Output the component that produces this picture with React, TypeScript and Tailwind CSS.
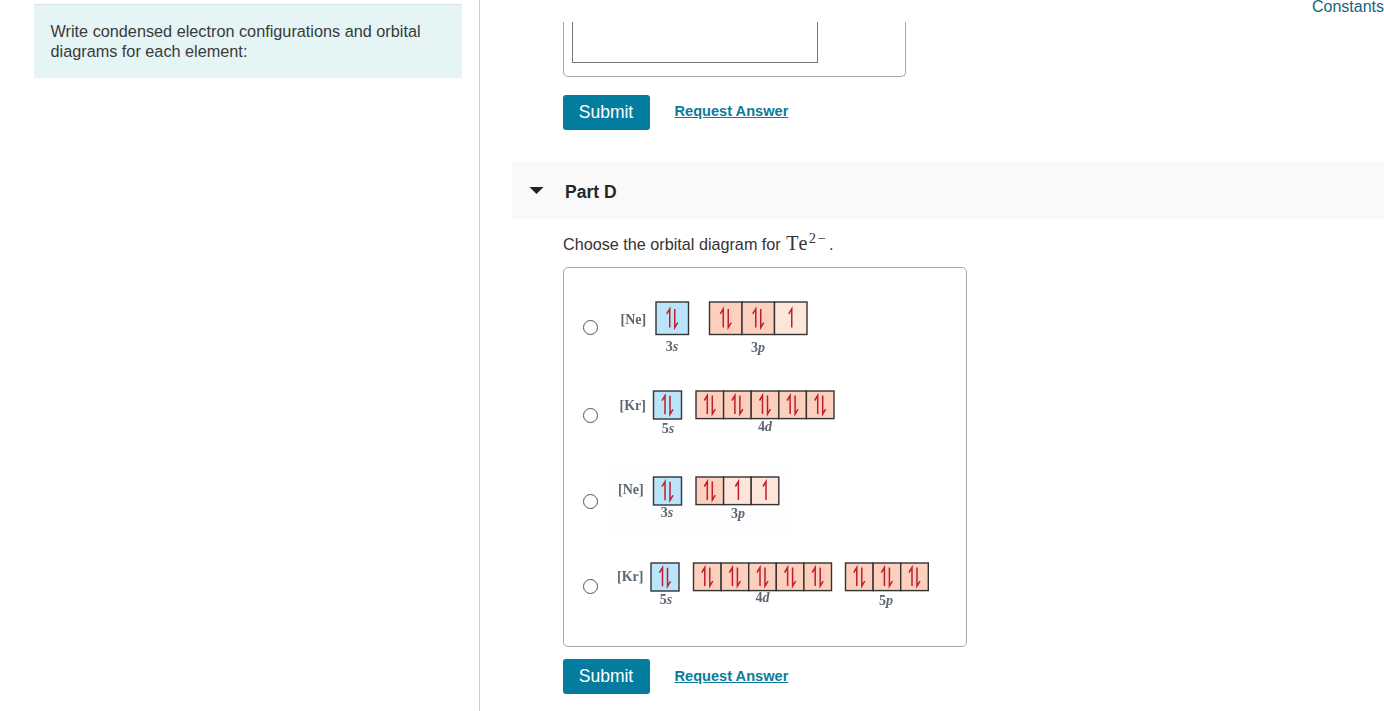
const sans = "font-['Liberation_Sans',Arial,sans-serif]"

type Group = {
  x: number
  y: number
  size: number
  fill: string
  cells: number[]
  label: [string, string]
  labelX: number
  labelY: number
}

type Option = {
  center: number
  rowClass: string
  core: { text: string; x: number; y: number }
  groups: Group[]
}

const BLUE = '#b9e4fa'
const PINK = '#fdd0be'
const PALE = '#fde5da'

const options: Option[] = [
  {
    center: 327,
    rowClass: 'h-[88px]',
    core: { text: '[Ne]', x: 620.5, y: 323.5 },
    groups: [
      { x: 656, y: 302, size: 32.5, fill: BLUE, cells: [2], label: ['3', 's'], labelX: 672, labelY: 351 },
      { x: 709.5, y: 302, size: 32.5, fill: PINK, cells: [2, 2, 1], label: ['3', 'p'], labelX: 758, labelY: 352 },
    ],
  },
  {
    center: 415,
    rowClass: 'h-[88px]',
    core: { text: '[Kr]', x: 619.5, y: 410 },
    groups: [
      { x: 653.5, y: 391, size: 28, fill: BLUE, cells: [2], label: ['5', 's'], labelX: 668, labelY: 433 },
      { x: 696, y: 391, size: 27.6, fill: PINK, cells: [2, 2, 2, 2, 2], label: ['4', 'd'], labelX: 765, labelY: 431 },
    ],
  },
  {
    center: 501,
    rowClass: 'h-[84px]',
    core: { text: '[Ne]', x: 618, y: 493.5 },
    groups: [
      { x: 653.5, y: 477, size: 28, fill: BLUE, cells: [2], label: ['3', 's'], labelX: 667, labelY: 517 },
      { x: 696, y: 477, size: 27.6, fill: PINK, cells: [2, 1, 1], label: ['3', 'p'], labelX: 738, labelY: 518 },
    ],
  },
  {
    center: 586,
    rowClass: 'h-[86px]',
    core: { text: '[Kr]', x: 617, y: 581 },
    groups: [
      { x: 651, y: 563, size: 28, fill: BLUE, cells: [2], label: ['5', 's'], labelX: 666, labelY: 604 },
      { x: 693.5, y: 563, size: 27.6, fill: PINK, cells: [2, 2, 2, 2, 2], label: ['4', 'd'], labelX: 762.5, labelY: 602 },
      { x: 845.5, y: 563, size: 27.6, fill: PINK, cells: [2, 2, 2], label: ['5', 'p'], labelX: 886, labelY: 605 },
    ],
  },
]

function Arrows({ cx, cy, count }: { cx: number; cy: number; count: number }) {
  const half = 9.3
  if (count === 1) {
    return (
      <path
        d={`M${cx + 1} ${cy + half} V${cy - half} L${cx - 2} ${cy - half + 5}`}
        fill="none"
        stroke="#bf1f2b"
        strokeWidth="1.5"
      />
    )
  }
  return (
    <g fill="none" stroke="#bf1f2b" strokeWidth="1.5">
      <path d={`M${cx - 2.5} ${cy + half} V${cy - half} L${cx - 5.5} ${cy - half + 5}`} />
      <path d={`M${cx + 2.5} ${cy - half} V${cy + half} L${cx + 5.5} ${cy + half - 5}`} />
    </g>
  )
}

function Diagram({ option, shaded }: { option: Option; shaded: boolean }) {
  const top = option.center - 40
  return (
    <svg width="330" height="80" viewBox={`610 ${top} 330 80`} className="blur-[0.5px] shrink-0">
      {shaded && <rect x="615" y="470" width="175" height="60" fill="#fdfdfd" />}
      <text x={option.core.x} y={option.core.y} fontFamily="Liberation Serif" fontSize="14" fontWeight="bold" fill="#5d6673">
        {option.core.text}
      </text>
      {option.groups.map((g, i) => (
        <g key={i}>
          {g.cells.map((n, j) => (
            <g key={j}>
              <rect
                x={g.x + j * g.size}
                y={g.y}
                width={g.size}
                height={g.size}
                fill={n === 1 ? PALE : g.fill}
                stroke="#333"
                strokeWidth="1.4"
              />
              <Arrows cx={g.x + j * g.size + g.size / 2} cy={g.y + g.size / 2} count={n} />
            </g>
          ))}
          <text
            x={g.labelX}
            y={g.labelY}
            textAnchor="middle"
            fontFamily="Liberation Serif"
            fontSize="14"
            fontWeight="bold"
            fill="#5d6673"
          >
            {g.label[0]}
            <tspan fontStyle="italic">{g.label[1]}</tspan>
          </text>
        </g>
      ))}
    </svg>
  )
}

function Actions({ linkClass }: { linkClass: string }) {
  return (
    <div className="flex items-center h-[35px]">
      <button className="w-[87px] h-[35px] pr-[1px] bg-[#047c9f] rounded-[3px] text-white text-[17.5px]">Submit</button>
      <a className={`ml-[24.5px] text-[14.6px] font-bold text-[#0b7b9c] underline ${linkClass}`}>Request Answer</a>
    </div>
  )
}

export default function App() {
  return (
    <div className={`flex h-[711px] w-[1384px] overflow-hidden bg-white text-[#333] ${sans}`}>
      <div className="w-[480px] shrink-0 border-r border-[#c6cfdd] pl-[34px] pt-[4px]">
        <div className="w-[428px] h-[74px] bg-[#e5f5f6] border-t border-[#d9e0e6] pl-[16.5px] pt-[16px] text-[16.25px] leading-[20px] text-[#3a3a3a]">
          Write condensed electron configurations and orbital
          <br />
          diagrams for each element:
        </div>
      </div>

      <div className="flex-1 min-w-0 pl-[32px]">
        <div className="h-[22px] flex justify-end">
          <a className="text-[16px] leading-[14px] text-[#14657e]">Constants</a>
        </div>

        <div className="pl-[51px]">
          <div className="w-[343px] h-[55px] border-x border-b border-[#a8a8a8] rounded-b-[5px] pl-[8px]">
            <div className="w-[246px] h-[41px] border-x border-b border-[#777]" />
          </div>
          <div className="mt-[18px]">
            <Actions linkClass="mb-[2px]" />
          </div>
        </div>

        <div className="mt-[32px] h-[57px] bg-[#f9f9f9] flex items-center pl-[17px]">
          <svg width="15" height="7" viewBox="0 0 15 7" className="mt-[-1px]">
            <path d="M0.5 0H14.5L7.5 7Z" fill="#222" />
          </svg>
          <span className="ml-[21px] mt-[1px] leading-[24px] pt-[1px] text-[17.5px] font-bold text-[#262626]">Part D</span>
        </div>

        <div className="pl-[51px]">
          <p className="mt-[12px] h-[24px] text-[16.2px] leading-[25px] text-[#333] whitespace-nowrap">
            Choose the orbital diagram for{' '}
            <span className="ml-[1px] font-['Liberation_Serif',serif] text-[20px] tracking-[1.4px]">
              Te
              <sup className="text-[14.5px] top-[-7px]">2−</sup>
            </span>
            <span className="ml-[2px]">.</span>
          </p>

          <div className="mt-[12px] w-[404px] h-[380px] border border-[#a8a8a8] rounded-[5px] pt-[15px] pl-[19px]">
            {options.map((option, i) => (
              <div key={i} className={`flex items-center ${option.rowClass}`}>
                <input
                  type="radio"
                  name="orbital"
                  className="appearance-none shrink-0 w-[15px] h-[15px] rounded-full border border-[#555] bg-white"
                />
                <div className="ml-[12px]">
                  <Diagram option={option} shaded={i === 2} />
                </div>
              </div>
            ))}
          </div>

          <div className="mt-[12px]">
            <Actions linkClass="mb-[0px]" />
          </div>
        </div>
      </div>
    </div>
  )
}
